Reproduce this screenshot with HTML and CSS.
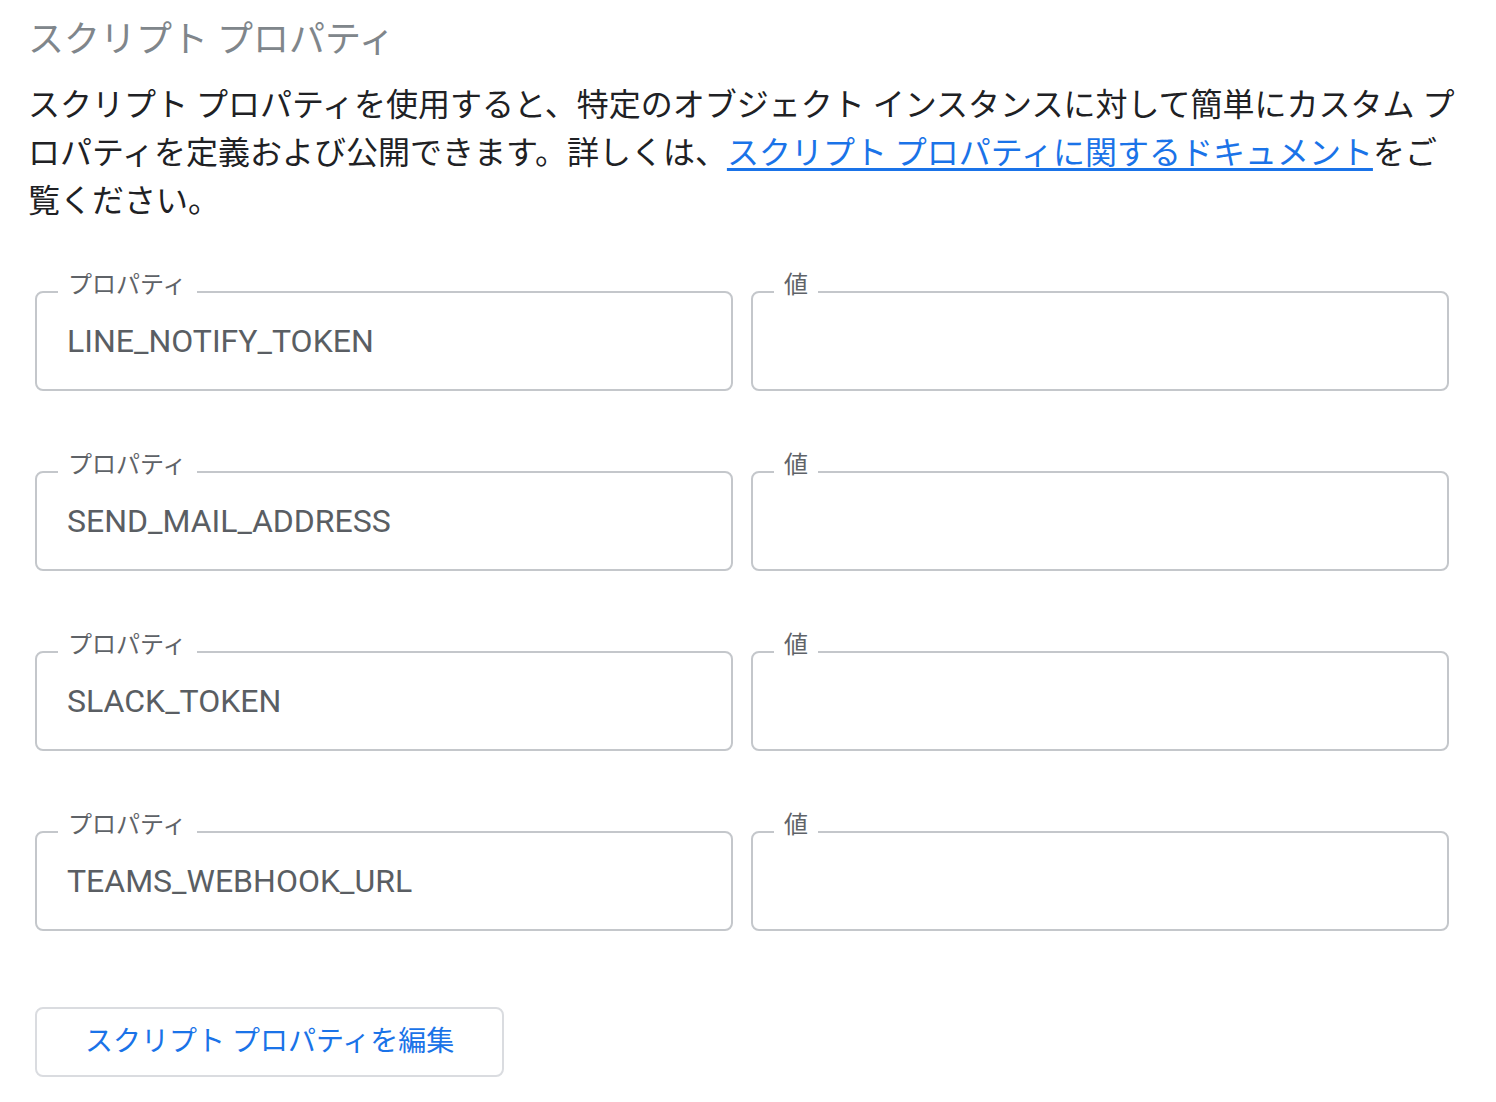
FILE: index.html
```html
<!DOCTYPE html>
<html lang="ja">
<head>
<meta charset="utf-8">
<title>スクリプト プロパティ</title>
<link rel="stylesheet" href="styles.css">
</head>
<body>
<main class="page">
  <h2 class="title">スクリプト プロパティ</h2>
  <p class="desc">スクリプト プロパティを使用すると、特定のオブジェクト インスタンスに対して簡単にカスタム プロパティを定義および公開できます。詳しくは、<a class="link" href="#">スクリプト プロパティに関するドキュメント</a>をご覧ください。</p>
  <div class="fields">
    <fieldset class="field"><legend class="field-label">プロパティ</legend><div class="field-value">LINE_NOTIFY_TOKEN</div></fieldset>
    <fieldset class="field"><legend class="field-label">値</legend><div class="field-value"></div></fieldset>
    <fieldset class="field"><legend class="field-label">プロパティ</legend><div class="field-value">SEND_MAIL_ADDRESS</div></fieldset>
    <fieldset class="field"><legend class="field-label">値</legend><div class="field-value"></div></fieldset>
    <fieldset class="field"><legend class="field-label">プロパティ</legend><div class="field-value">SLACK_TOKEN</div></fieldset>
    <fieldset class="field"><legend class="field-label">値</legend><div class="field-value"></div></fieldset>
    <fieldset class="field"><legend class="field-label">プロパティ</legend><div class="field-value">TEAMS_WEBHOOK_URL</div></fieldset>
    <fieldset class="field"><legend class="field-label">値</legend><div class="field-value"></div></fieldset>
  </div>
  <button class="edit-btn" type="button">スクリプト プロパティを編集</button>
</main>
</body>
</html>
```
FILE: styles.css
```css
* { box-sizing: border-box; }
html, body { margin: 0; padding: 0; background: #ffffff; }
body {
  font-family: "Roboto", "Noto Sans CJK JP", sans-serif;
  color: #202124;
}
.page {
  width: 1464px;
  padding: 16px 0 0 28px;
}
.title {
  margin: 0;
  font-size: 36px;
  line-height: 48px;
  font-weight: 400;
  color: #80868b;
}
.desc {
  margin: 17px 0 0 0;
  font-size: 32px;
  line-height: 48px;
  color: #202124;
}
.link {
  color: #1a73e8;
  text-decoration: underline;
  text-underline-offset: 4px;
}
.fields {
  margin: 48px 15px 0 7px;
  display: grid;
  grid-template-columns: 1fr 1fr;
  column-gap: 18px;
  row-gap: 62px;
}
.field {
  margin: 0;
  min-width: 0;
  padding: 0 30px;
  border: 2px solid #c4c7cb;
  border-radius: 8px;
}
.field-label {
  margin-left: -9px;
  padding: 0 10px 14px;
  font-size: 24px;
  line-height: 24px;
  color: #5f6368;
}
.field-value {
  height: 78px;
  padding-bottom: 18px;
  font-size: 32px;
  line-height: 60px;
  color: #5a5e63;
}
.edit-btn {
  margin: 76px 0 0 7px;
  height: 70px;
  padding: 0 48px;
  background: #ffffff;
  border: 2px solid #dadce0;
  border-radius: 8px;
  font-family: "Roboto", "Noto Sans CJK JP", sans-serif;
  font-size: 28px;
  line-height: 1;
  color: #1a73e8;
  cursor: pointer;
}
```
